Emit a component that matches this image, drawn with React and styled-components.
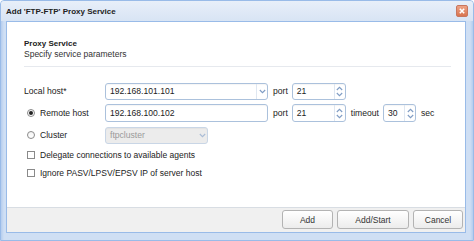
import React from 'react'
import styled, { createGlobalStyle } from 'styled-components'

const GlobalStyle = createGlobalStyle`
  html, body {
    margin: 0;
    padding: 0;
    background: #ffffff;
  }
  * {
    box-sizing: border-box;
  }
`

const StyledWindow = styled.div`
  width: 474px;
  height: 241px;
  display: flex;
  flex-direction: column;
  padding: 0 7px 7px 5px;
  background: linear-gradient(to right, #b5cdee 0px, #cfdff4 3px, #cfdff4 calc(100% - 3px), #b5cdee 100%);
  border: 1px solid #99bbe8;
  border-radius: 4px 4px 0 0;
  font-family: "Liberation Sans", Arial, sans-serif;
  color: #222222;
  overflow: hidden;
`

const StyledTitleBar = styled.div`
  height: 20px;
  flex: none;
  display: flex;
  align-items: center;
  justify-content: space-between;
  margin: 0 -7px 0 -5px;
  padding: 0 5px 0 5px;
  background: linear-gradient(to bottom, #e8eff9, #d8e4f4);
  font-weight: bold;
  font-size: 8px;
  color: #222222;
`

const StyledClose = styled.div`
  width: 12px;
  height: 12px;
  border-radius: 2px;
  background: linear-gradient(to bottom, #eea386, #d8744f);
  border: 1px solid #c8765e;
  display: flex;
  align-items: center;
  justify-content: center;
`

const StyledPanel = styled.div`
  flex: 1;
  display: flex;
  flex-direction: column;
  background: #ffffff;
  border: 1px solid #99bbe8;
`

const StyledContent = styled.div`
  flex: 1;
  padding: 16px 14px 0 17px;
`

const StyledHeader = styled.div`
  padding-bottom: 6px;
  border-bottom: 1px solid #e6e9ee;
  margin-bottom: 15px;

  h3 {
    margin: 0;
    font-size: 8px;
    font-weight: bold;
    line-height: 11px;
    color: #222222;
  }

  p {
    margin: 0;
    font-size: 8.5px;
    line-height: 11px;
    color: #333333;
  }
`

const StyledRow = styled.div`
  display: flex;
  align-items: center;
  height: 18px;
  margin-bottom: ${p => p.$gap || 4}px;
  font-size: 8.6px;
  color: #222222;
`

const StyledLabel = styled.label`
  width: 81px;
  flex: none;
  display: flex;
  align-items: center;
  padding-left: ${p => (p.$indent ? 3 : 0)}px;
`

const StyledRadio = styled.span`
  width: 8px;
  height: 8px;
  border-radius: 50%;
  border: 1px solid #8a8a8a;
  background: linear-gradient(to bottom, #f4f4f4, #ffffff);
  margin-right: 5px;
  display: flex;
  align-items: center;
  justify-content: center;

  &::after {
    content: '';
    width: 4px;
    height: 4px;
    border-radius: 50%;
    background: ${p => (p.$checked ? '#222222' : 'transparent')};
  }
`

const StyledField = styled.div`
  width: ${p => p.$width}px;
  height: ${p => p.$height || 18}px;
  flex: none;
  display: flex;
  align-items: center;
  border: 1px solid ${p => (p.$disabled ? '#c9d6e6' : '#abc1dc')};
  border-radius: 3px;
  background: ${p => (p.$disabled ? '#ececec' : '#ffffff')};
  color: ${p => (p.$disabled ? '#9a9a9a' : '#222222')};
  padding-left: 4px;
  font-size: 8.6px;
  box-shadow: inset 0 1px 1px rgba(0, 0, 0, 0.04);
`

const StyledValue = styled.span`
  flex: 1;
`

const StyledArrow = styled.span`
  width: 11px;
  height: 100%;
  flex: none;
  display: flex;
  align-items: center;
  justify-content: center;
  border-left: 1px solid ${p => (p.$visible ? '#dfe7f1' : 'transparent')};
`

const StyledSpinBtn = styled.span`
  width: 11px;
  height: 100%;
  flex: none;
  display: flex;
  flex-direction: column;
  align-items: center;
  justify-content: center;
  gap: 1px;
  border-left: 1px solid #dfe7f1;
  border-radius: 0 3px 3px 0;
`

const StyledUnit = styled.span`
  padding: 0 4px 0 5px;
  font-size: 8.6px;
  color: #222222;
`

const StyledCheckRow = styled.div`
  display: flex;
  align-items: center;
  height: 10px;
  margin: ${p => p.$top || 0}px 0 8px 3px;
  font-size: 8.5px;
  color: #222222;
`

const StyledCheck = styled.span`
  width: 8px;
  height: 8px;
  border: 1px solid #8a8a8a;
  background: #ffffff;
  margin-right: 5px;
  flex: none;
`

const StyledFooter = styled.div`
  height: 25px;
  flex: none;
  display: flex;
  align-items: center;
  justify-content: flex-end;
  gap: 4px;
  padding: 0 2px 1px 0;
  background: #f0f0f0;
  border-top: 1px solid #d8dde3;
`

const StyledButton = styled.button`
  width: ${p => p.$width}px;
  height: 19px;
  border: 1px solid #b3b3b3;
  border-radius: 3px;
  background: linear-gradient(to bottom, #ffffff, #ececec);
  font-family: "Liberation Sans", Arial, sans-serif;
  font-size: 8.5px;
  color: #333333;
  padding: 0;
`

const ChevronDown = ({ color = '#7f9cc4' }) => (
  <svg width="7" height="5" viewBox="0 0 7 5">
    <path d="M0.8 1 L3.5 3.7 L6.2 1" fill="none" stroke={color} strokeWidth="1.1" />
  </svg>
)

const ChevronUp = ({ color = '#7f9cc4' }) => (
  <svg width="7" height="5" viewBox="0 0 7 5">
    <path d="M0.8 4 L3.5 1.3 L6.2 4" fill="none" stroke={color} strokeWidth="1.1" />
  </svg>
)

function Combo({ value, width, disabled }) {
  return (
    <StyledField $width={width} $height={17} $disabled={disabled}>
      <StyledValue>{value}</StyledValue>
      <StyledArrow $visible={!disabled}>
        <ChevronDown color={disabled ? '#a9bcd6' : '#7f9cc4'} />
      </StyledArrow>
    </StyledField>
  )
}

function Spinner({ value, width, height }) {
  return (
    <StyledField $width={width} $height={height}>
      <StyledValue>{value}</StyledValue>
      <StyledSpinBtn>
        <ChevronUp />
        <ChevronDown />
      </StyledSpinBtn>
    </StyledField>
  )
}

export default function App() {
  return (
    <>
      <GlobalStyle />
      <StyledWindow>
        <StyledTitleBar>
          <span>Add 'FTP-FTP' Proxy Service</span>
          <StyledClose>
            <svg width="6" height="6" viewBox="0 0 6 6">
              <path d="M0.8 0.8 L5.2 5.2 M5.2 0.8 L0.8 5.2" stroke="#ffffff" strokeWidth="1.6" />
            </svg>
          </StyledClose>
        </StyledTitleBar>
        <StyledPanel>
          <StyledContent>
            <StyledHeader>
              <h3>Proxy Service</h3>
              <p>Specify service parameters</p>
            </StyledHeader>
            <StyledRow $gap={4}>
              <StyledLabel>Local host*</StyledLabel>
              <Combo value="192.168.101.101" width={163} />
              <StyledUnit>port</StyledUnit>
              <Spinner value="21" width={54} height={17} />
            </StyledRow>
            <StyledRow $gap={4}>
              <StyledLabel $indent>
                <StyledRadio $checked />
                Remote host
              </StyledLabel>
              <StyledField $width={163}>
                <StyledValue>192.168.100.102</StyledValue>
              </StyledField>
              <StyledUnit>port</StyledUnit>
              <Spinner value="21" width={54} />
              <StyledUnit>timeout</StyledUnit>
              <Spinner value="30" width={33} />
              <StyledUnit>sec</StyledUnit>
            </StyledRow>
            <StyledRow $gap={6}>
              <StyledLabel $indent>
                <StyledRadio />
                Cluster
              </StyledLabel>
              <Combo value="ftpcluster" width={103} disabled />
            </StyledRow>
            <StyledCheckRow>
              <StyledCheck />
              Delegate connections to available agents
            </StyledCheckRow>
            <StyledCheckRow>
              <StyledCheck />
              Ignore PASV/LPSV/EPSV IP of server host
            </StyledCheckRow>
          </StyledContent>
          <StyledFooter>
            <StyledButton $width={51}>Add</StyledButton>
            <StyledButton $width={72}>Add/Start</StyledButton>
            <StyledButton $width={50}>Cancel</StyledButton>
          </StyledFooter>
        </StyledPanel>
      </StyledWindow>
    </>
  )
}
